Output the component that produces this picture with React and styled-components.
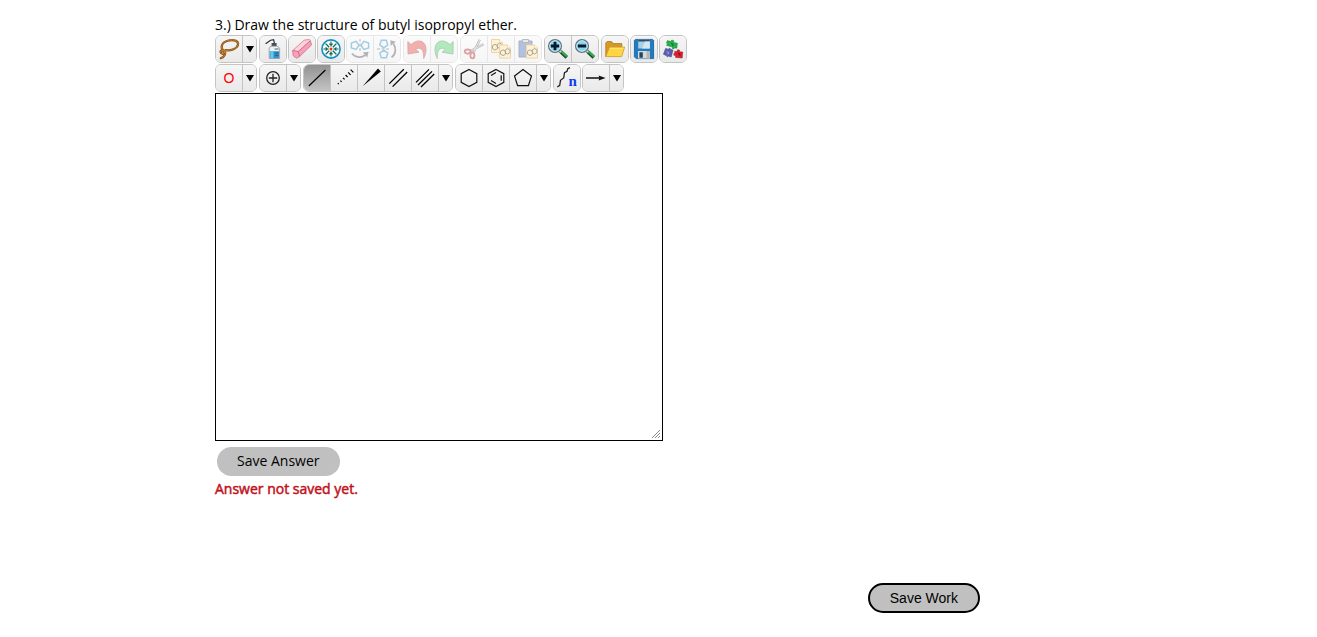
import React from "react";
import styled, { createGlobalStyle } from "styled-components";

const GlobalStyle = createGlobalStyle`
  body {
    margin: 0;
    background: #fff;
    color: #000;
    font-family: "Open Sans", "Noto Sans", sans-serif;
    font-size: 14px;
    line-height: 20px;
  }
`;

const Page = styled.main`
  box-sizing: border-box;
  max-width: 887px;
  margin: 0 auto;
  padding: 15px 0 24px;
`;

const Prompt = styled.p`
  margin: 0;
`;

const Toolbars = styled.div`
  display: flex;
  flex-direction: column;
  gap: 1px;
  margin-bottom: 1px;
`;

const Toolbar = styled.div`
  display: flex;
  flex-wrap: wrap;
`;

const Group = styled.div`
  display: flex;
  box-sizing: border-box;
  height: 28px;
  margin-right: ${(p) => (p.$single ? 1 : 2)}px;
  border: 1px solid #c4c4c4;
  border-radius: 6px;
  overflow: hidden;
  opacity: ${(p) => (p.$off ? 0.4 : 1)};
`;

const ToolButton = styled.button`
  display: flex;
  align-items: center;
  justify-content: center;
  box-sizing: border-box;
  width: ${(p) => (p.$caret ? 14 : 27)}px;
  height: 26px;
  padding: 0;
  border: 0;
  border-right: 1px solid #c4c4c4;
  background: ${(p) =>
    p.$active
      ? "linear-gradient(#929292, #c4c4c4)"
      : "linear-gradient(#f6f6f6, #e9e9e9)"};
  color: ${(p) => (p.$red ? "#f00" : "#000")};
  font: 14px "Liberation Sans", Arial, sans-serif;

  &:last-child {
    width: ${(p) => (p.$caret ? 13 : 26)}px;
    border-right: 0;
  }
`;

const Glyph = styled.svg`
  display: block;
  flex: none;
  overflow: visible;
`;

const Sketcher = styled.div`
  position: relative;
  box-sizing: border-box;
  width: 448px;
  max-width: 100%;
  height: 348px;
  border: 1px solid #000;
  background: #fff;
`;

const Grip = styled.svg`
  position: absolute;
  right: 2px;
  bottom: 2px;
`;

const PillButton = styled.button`
  border-radius: 15px;
  background: #c0c0c0;
  color: #000;
`;

const SaveAnswer = styled(PillButton)`
  display: block;
  height: 29px;
  margin: 6px 2px 3px;
  padding: 0 20px 2px;
  border: 0;
  font: 14px "Open Sans", "Noto Sans", sans-serif;
`;

const Status = styled.p`
  margin: 0;
  color: #c1121c;
  -webkit-text-stroke: 0.5px #c1121c;
`;

const Footer = styled.footer`
  display: flex;
  justify-content: flex-end;
  margin-top: 84px;
  padding-right: 122px;
`;

const SaveWork = styled(PillButton)`
  height: 30px;
  padding: 0 20px;
  border: 2px solid #000;
  font: 14px "Liberation Sans", Arial, sans-serif;
`;

const ring = (sides, x, y, r, turn = -90) =>
  Array.from({ length: sides }, (_, i) => {
    const a = ((360 / sides) * i + turn) * (Math.PI / 180);
    return `${(x + r * Math.cos(a)).toFixed(2)},${(y + r * Math.sin(a)).toFixed(2)}`;
  }).join(" ");

const MagnifierBase = ({ plus }) => (
  <>
    <path d="M12 12l6.8 6.4" stroke="#174d27" strokeWidth="3.6" />
    <path d="M13.2 12.2l5.8 5.4" stroke="#35ad55" strokeWidth="2" />
    <path d="M11 11l2 2" stroke="#ccc" strokeWidth="2.5" />
    <circle cx="7" cy="7" r="6.4" fill="#8bd3ee" stroke="#65737a" strokeWidth="1.3" />
    <circle cx="7" cy="7" r="5.2" fill="none" stroke="#c2ebf7" strokeWidth="1" />
    <path d={plus ? "M2.8 7h8.4M7 2.8v8.4" : "M2.8 7h8.4"} stroke="#071a2b" strokeWidth="2.8" />
  </>
);

const DocSheet = ({ x, y }) => (
  <g transform={`translate(${x} ${y})`}>
    <path d="M.5.5h8l3 3v10H.5z" fill="#ffe08a" stroke="#d8962a" />
    <path d="M8.5.5v3h3" fill="#fff3cf" stroke="#d8962a" strokeWidth=".8" />
    <g fill="none" stroke="#222" strokeWidth="1">
      <polygon points={ring(6, 4, 8.2, 2.9)} />
      <polygon points={ring(6, 8.6, 6.8, 2.7)} />
    </g>
  </g>
);

const ICONS = {
  lasso: (
    <g fill="none" strokeLinecap="round">
      <g stroke="#8a4f12" strokeWidth="2.2">
        <path d="M4.6 12C1 8.5 2.4 3.6 8.6 1.7c6.4-1.7 11 .2 10.4 3.9-.7 4-7 6.3-12.6 5.6" />
        <path d="M5 12c-3-1.5-4.8.8-2.5 2.2 2 1.2 4-1 3-2.6 1.6 3.2.3 5.8-3.7 7.6" />
      </g>
      <g stroke="#d09240" strokeWidth=".9" strokeDasharray="1.5 1.2">
        <path d="M4.6 12C1 8.5 2.4 3.6 8.6 1.7c6.4-1.7 11 .2 10.4 3.9-.7 4-7 6.3-12.6 5.6" />
        <path d="M5 12c-3-1.5-4.8.8-2.5 2.2 2 1.2 4-1 3-2.6 1.6 3.2.3 5.8-3.7 7.6" />
      </g>
    </g>
  ),
  bottle: (
    <>
      <path d="M2.6 4.8L7.6 1.2l3-.6.8 3.6" fill="none" stroke="#2c3134" strokeWidth="1.2" />
      <path d="M8.6 4h5v3.2h-5z" fill="#4a5055" />
      <path d="M7.6 7.2h7l2 2.2v10.1H6.2V9.4z" fill="#eef1f2" stroke="#8b9398" strokeWidth=".8" />
      <path d="M6.8 12.2H16V19H6.8z" fill="#2396d6" />
      <path d="M7.4 12.2h3V19h-3z" fill="#6cc6ef" />
      <path d="M11.6 10h4M12 14h3.6M12 16.4h3.6" stroke="#3c5666" strokeWidth=".9" />
    </>
  ),
  eraser: (
    <g stroke="#c9647f" strokeWidth=".7" strokeLinejoin="round">
      <path d="M.6 11.6L12.2 1.2l5-.7 1.2 1.2L6.2 12.6z" fill="#ffd3dc" />
      <path d="M6.2 12.6L18.4 1.7l1.2 4.2L7.6 17.6z" fill="#f5a0b8" />
      <path d="M.6 11.6l5.6 1 1.4 5-3 1.6-3.4-2.4z" fill="#ff9fba" />
    </g>
  ),
  snow: (
    <>
      <circle cx="10" cy="10" r="9.1" fill="#f7fdff" stroke="#168fc4" strokeWidth="1.6" />
      {[0, 90, 180, 270].map((a) => (
        <g key={a} transform={`rotate(${a} 10 10)`} fill="none">
          <path d="M10 7.6V2.4M8.4 4.6l1.6 1.8 1.6-1.8" stroke="#12684c" strokeWidth="1.1" />
          <path d="M11.8 8.2l3.6-3.6" stroke="#12684c" strokeWidth="1.3" />
        </g>
      ))}
      <circle cx="10" cy="10" r="1.5" fill="#e33a2c" />
    </>
  ),
  flipH: (
    <g fill="none">
      <g stroke="#1683bd" strokeWidth="1.5">
        <polygon points={ring(5, 4.8, 6.4, 4.2, 0)} />
        <polygon points={ring(5, 15.2, 6.4, 4.2, 180)} />
      </g>
      <path d="M10 0v13" stroke="#555" strokeDasharray="3 1.5" />
      <path d="M2 14.5c3.5 4.4 9 4.8 13.5 1.6" stroke="#444" strokeWidth="1.8" />
      <path d="M12.8 13.6l5.8-.8-1.4 5.6z" fill="#444" />
    </g>
  ),
  flipV: (
    <g fill="none">
      <g stroke="#1683bd" strokeWidth="1.5">
        <polygon points={ring(5, 6.8, 4.6, 4.2, 90)} />
        <polygon points={ring(5, 6.8, 15.4, 4.2, -90)} />
      </g>
      <path d="M0 10h13.5" stroke="#555" strokeDasharray="3 1.5" />
      <path d="M14.5 18.4c4.6-3.4 4.8-9 2-13.6" stroke="#444" strokeWidth="1.8" />
      <path d="M13.6 6.8l-.2-5.6 5.4 1.6z" fill="#444" />
    </g>
  ),
  undo: (
    <path d="M.8 2.6l3.4 3C9 .2 17.2.5 18.8 8c.7 4-.3 8-2.2 11.5.3-5-.5-9.2-3.7-10.1-1.8-.5-3.2.4-4 1.2l3.1 2.6L1 15z" fill="#df3c35" stroke="#8f2a24" strokeWidth=".8" />
  ),
  redo: (
    <path d="M19.2 2.6l-3.4 3C11 .2 2.8.5 1.2 8c-.7 4 .3 8 2.2 11.5-.3-5 .5-9.2 3.7-10.1 1.8-.5 3.2.4 4 1.2L8 13.2 19 15z" fill="#3fc75e" stroke="#247a3a" strokeWidth=".8" />
  ),
  cut: (
    <g fill="none">
      <path d="M15.8.8L9.6 13M19.5 5.2L6 12.2" stroke="#555" strokeWidth="2.4" />
      <path d="M15.8.8L9.6 13M19.5 5.2L6 12.2" stroke="#ddd" strokeWidth=".8" />
      <ellipse cx="3.6" cy="12.6" rx="2.9" ry="2.1" stroke="#a81c22" strokeWidth="1.9" />
      <ellipse cx="8.4" cy="16.4" rx="2" ry="2.9" stroke="#a81c22" strokeWidth="1.9" />
    </g>
  ),
  copy: (
    <>
      <DocSheet x={0} y={0} />
      <DocSheet x={8} y={5.5} />
    </>
  ),
  paste: (
    <>
      <path d="M1 2h13v16H1z" fill="#4766ad" stroke="#263f79" />
      <path d="M4.5.5h6v3h-6z" fill="#ccc" stroke="#555" />
      <DocSheet x={8} y={5.5} />
    </>
  ),
  zoomIn: <MagnifierBase plus />,
  zoomOut: <MagnifierBase />,
  folder: (
    <g strokeLinejoin="round" strokeWidth=".8">
      <path d="M.8 17.4V3.8L2 2.6h4.6l1.6 2h8.6v4L5 10z" fill="#d59a25" stroke="#af771b" />
      <path d="M.8 17.6l3.6-9.4h15.2L16.7 17.6z" fill="#ffd641" stroke="#cf9520" />
      <path d="M5 9.2h13.4" stroke="#fff09a" />
    </g>
  ),
  disk: (
    <>
      <path d="M.4 1.4l1-1h17.2l1 1v18.2H2.2L.4 17.8z" fill="#1f7cc0" stroke="#105a98" strokeWidth=".8" />
      <path d="M4.2.8h11.6v8.8H4.2z" fill="#a9cfe2" />
      <path d="M4.2.8h11.6v1.8H4.2z" fill="#2d4f66" />
      <path d="M11 2.6h4.8v7H8z" fill="#d3e7f0" />
      <path d="M4 12h12v7.6H4z" fill="#d6d8da" />
      <path d="M5.4 13.2h3.4v5.6H5.4z" fill="#24435e" />
      <path d="M12.5 12H16v7.6h-3.5z" fill="#b4b8bb" />
    </>
  ),
  blocks: (
    <>
      <path d="M4.4 1.6l3.4 1 1-1.6 2 .7-.2 1.8 3.8.7-.6 5-2.2-.5-.7 1.2-1.6-.5.1-1.4-5.8-1.6.8-1.8-1-.6z" fill="#27b14b" stroke="#11803a" strokeWidth=".5" />
      <path d="M2.6 9.4l2.6.8 1.4-1.1 1.3 1.3 2.1.7-1.8 6.9-2.6-.9-1 .9-1.3-1.4L.4 15.2z" fill="#5a5fae" stroke="#343985" strokeWidth=".5" />
      <path d="M11.6 12.4l2.4.1.6-1.7 1.8.2.2 1.8 3.1.2-.5 6-6.6-.5.1-1.9-1.9-.4.1-1.8 1-.1z" fill="#d82031" stroke="#9f1120" strokeWidth=".5" />
      <path d="M8 4.6l2.2.6-.6 2" fill="none" stroke="#0d6b2c" />
      <path d="M3.6 12.8l2 .6-.6 2" fill="none" stroke="#a9ade6" />
      <path d="M15 14.6l2 .2-.2 1.8" fill="none" stroke="#7c0713" />
    </>
  ),
  charge: (
    <g fill="none" stroke="#222" strokeWidth="1.3">
      <circle cx="10" cy="10" r="6.3" />
      <path d="M10 5.8v8.4M5.8 10h8.4" />
    </g>
  ),
  single: <path d="M1.8 18L18.4 2" stroke="#000" strokeWidth="1.2" />,
  recessed: (
    <path d="M3.8 15.2l1 1M6.4 12.6l1.2 1.2M9 9.8l1.6 1.6M11.6 7l2 2M14.2 4.4l2.4 2.4M16.6 1.6l2.8 2.8" stroke="#000" strokeWidth="1.2" />
  ),
  wedge: <path d="M1.6 18.2L17 .4l2.8 3z" fill="#000" />,
  double: <path d="M1.3 15.6L15.8 1.2M4.6 18.6L19.2 4" stroke="#000" strokeWidth="1.3" />,
  triple: <path d="M1 14.4L14 1.4M3 17L17 3.4M6 19L19.2 6" stroke="#000" strokeWidth="1.3" />,
  hexagon: <polygon points="10,1.5 17.8,5.7 17.8,14.3 10,18.5 2.2,14.3 2.2,5.7" fill="none" stroke="#111" strokeWidth="1.2" />,
  benzene: (
    <g fill="none" stroke="#111" strokeWidth="1.2">
      <polygon points="10,1.5 17.8,5.7 17.8,14.3 10,18.5 2.2,14.3 2.2,5.7" />
      <path d="M15.2 7.2v5.6M10 4.6L5 7.5M10 15.4l-5-2.9" />
    </g>
  ),
  pentagon: <polygon points="10,1.5 18.5,8 15.4,17.7 4.6,17.7 1.5,8" fill="none" stroke="#111" strokeWidth="1.2" />,
  chain: (
    <>
      <path d="M.3 19l2.4-1.7.8-5L6.7 10l.8-5.3L10 3.3l.8-2.6L13-.3" fill="none" stroke="#222" strokeWidth="1.3" />
      <text x="11.6" y="18.4" fill="#0a3cf0" fontFamily="Liberation Serif, Times New Roman, serif" fontWeight="700" fontSize="15">n</text>
    </>
  ),
  arrow: (
    <>
      <path d="M0 10h14" stroke="#111" strokeWidth="1.3" />
      <path d="M12.6 7.6l7 2.4-7 2.4.8-2.4z" fill="#111" />
    </>
  ),
};

const Icon = ({ name }) => (
  <Glyph width="20" height="20" viewBox="0 0 20 20" aria-hidden="true">
    {ICONS[name]}
  </Glyph>
);

const Caret = () => (
  <Glyph width="8" height="8" viewBox="0 0 8 8" aria-hidden="true">
    <path d="M0 1h8L4 7.4z" fill="#000" />
  </Glyph>
);

const EDIT_TOOLS = [
  { items: [["lasso", "Lasso"]], caret: "Selection tools" },
  { items: [["bottle", "Clear"]] },
  { items: [["eraser", "Erase"]] },
  { items: [["snow", "Clean"]] },
  { items: [["flipH", "Flip horizontally"], ["flipV", "Flip vertically"]], off: true },
  { items: [["undo", "Undo"], ["redo", "Redo"]], off: true },
  { items: [["cut", "Cut"], ["copy", "Copy"], ["paste", "Paste"]], off: true },
  { items: [["zoomIn", "Zoom in"], ["zoomOut", "Zoom out"]] },
  { items: [["folder", "Open"]] },
  { items: [["disk", "Save"]] },
  { items: [["blocks", "Search"]] },
];

const DRAW_TOOLS = [
  { items: [["O", "Oxygen"]], caret: "Elements" },
  { items: [["charge", "Increase charge"]], caret: "Attributes" },
  {
    items: [
      ["single", "Single bond"],
      ["recessed", "Recessed bond"],
      ["wedge", "Protruding bond"],
      ["double", "Double bond"],
      ["triple", "Triple bond"],
    ],
    active: "single",
    caret: "Other bonds",
  },
  {
    items: [["hexagon", "Cyclohexane"], ["benzene", "Benzene"], ["pentagon", "Cyclopentane"]],
    caret: "Other rings",
  },
  { items: [["chain", "Carbon chain"]] },
  { items: [["arrow", "Reaction arrow"]], caret: "Other arrows" },
];

const ToolRow = ({ label, groups }) => (
  <Toolbar role="toolbar" aria-label={label}>
    {groups.map(({ items, caret, off, active }) => (
      <Group key={items[0][0]} $single={items.length === 1 && !caret} $off={off}>
        {items.map(([name, title]) => (
          <ToolButton
            key={name}
            type="button"
            aria-label={title}
            disabled={off}
            $active={active === name}
            $red={name === "O"}
          >
            {ICONS[name] ? <Icon name={name} /> : name}
          </ToolButton>
        ))}
        {caret && (
          <ToolButton type="button" aria-label={caret} $caret>
            <Caret />
          </ToolButton>
        )}
      </Group>
    ))}
  </Toolbar>
);

export default function App() {
  return (
    <>
      <GlobalStyle />
      <Page>
        <Prompt>3.) Draw the structure of butyl isopropyl ether.</Prompt>
        <Toolbars>
          <ToolRow label="Edit tools" groups={EDIT_TOOLS} />
          <ToolRow label="Drawing tools" groups={DRAW_TOOLS} />
        </Toolbars>
        <Sketcher role="application" aria-label="Structure drawing area">
          <Grip width="8" height="8" viewBox="0 0 8 8" aria-hidden="true">
            <path d="M0 8L8 0M3 8L8 3M6 8L8 6" stroke="#888" strokeWidth="1" />
          </Grip>
        </Sketcher>
        <SaveAnswer type="button">Save Answer</SaveAnswer>
        <Status>Answer not saved yet.</Status>
        <Footer>
          <SaveWork type="button">Save Work</SaveWork>
        </Footer>
      </Page>
    </>
  );
}
